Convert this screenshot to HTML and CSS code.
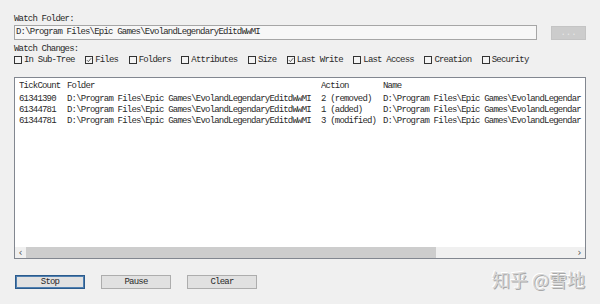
FILE: index.html
```html
<!DOCTYPE html>
<html lang="en">
<head>
    <meta charset="UTF-8">
    <title>Directory Watcher</title>
    <link rel="stylesheet" href="styles.css">
</head>
<body>
    <div class="window">
        <div class="label">Watch Folder:</div>
        <div class="folder-row">
            <div class="textbox">D:\Program Files\Epic Games\EvolandLegendaryEditdWwMI</div>
            <button class="browse-btn" disabled>...</button>
        </div>

        <div class="label changes">Watch Changes:</div>
        <div class="checks">
            <label class="check"><span class="box"></span>In Sub-Tree</label>
            <label class="check"><span class="box checked"><svg viewBox="0 0 8 8"><path d="M1.2 4.2 L3.2 6.2 L6.9 1.6" /></svg></span>Files</label>
            <label class="check"><span class="box"></span>Folders</label>
            <label class="check"><span class="box"></span>Attributes</label>
            <label class="check"><span class="box"></span>Size</label>
            <label class="check"><span class="box checked"><svg viewBox="0 0 8 8"><path d="M1.2 4.2 L3.2 6.2 L6.9 1.6" /></svg></span>Last Write</label>
            <label class="check"><span class="box"></span>Last Access</label>
            <label class="check"><span class="box"></span>Creation</label>
            <label class="check"><span class="box"></span>Security</label>
        </div>

        <div class="list">
            <div class="list-body">
                <div class="row header">
                    <span>TickCount</span><span>Folder</span><span>Action</span><span>Name</span>
                </div>
                <div class="row">
                    <span>61341390</span><span>D:\Program Files\Epic Games\EvolandLegendaryEditdWwMI</span><span>2 (removed)</span><span>D:\Program Files\Epic Games\EvolandLegendar</span>
                </div>
                <div class="row">
                    <span>61344781</span><span>D:\Program Files\Epic Games\EvolandLegendaryEditdWwMI</span><span>1 (added)</span><span>D:\Program Files\Epic Games\EvolandLegendar</span>
                </div>
                <div class="row">
                    <span>61344781</span><span>D:\Program Files\Epic Games\EvolandLegendaryEditdWwMI</span><span>3 (modified)</span><span>D:\Program Files\Epic Games\EvolandLegendar</span>
                </div>
            </div>
            <div class="hscroll">
                <span class="arrow">&lsaquo;</span>
                <div class="track"><div class="thumb"></div></div>
                <span class="arrow">&rsaquo;</span>
            </div>
        </div>

        <div class="buttons">
            <button class="btn focused">Stop</button>
            <button class="btn">Pause</button>
            <button class="btn">Clear</button>
        </div>

        <div class="watermark">知乎 @雪地</div>
    </div>
</body>
</html>
```

FILE: styles.css
```css
body {
    margin: 0;
    background-color: #f0f0f0;
    font-family: "Liberation Mono", monospace;
    font-size: 9px;
    letter-spacing: -0.8px;
    color: #2a2a2a;
}

.window {
    position: relative;
    width: 600px;
    height: 304px;
    padding: 14px 14px 0 14px;
    box-sizing: border-box;
}

.label {
    height: 10px;
    line-height: 10px;
}

.label.changes {
    margin-top: 4px;
}

.folder-row {
    display: flex;
    align-items: center;
    margin-top: 1px;
    height: 15px;
}

.textbox {
    width: 520px;
    height: 13px;
    line-height: 13px;
    padding-left: 1px;
    border: 1px solid #a6a6a6;
    background-color: #f7f7f7;
    white-space: nowrap;
}

.browse-btn {
    margin-left: 14px;
    width: 35px;
    height: 14px;
    padding: 0;
    border: 1px solid #c4c4c4;
    background-color: #cccccc;
    color: #e8e8e8;
    font-family: inherit;
    font-size: 9px;
    line-height: 10px;
}

.checks {
    display: flex;
    gap: 10.5px;
    margin-top: 1px;
    height: 10px;
    align-items: center;
}

.check {
    display: flex;
    align-items: center;
    gap: 2px;
    white-space: nowrap;
    line-height: 10px;
}

.box {
    width: 6px;
    height: 6px;
    border: 1px solid #333;
    background-color: #f4f4f4;
    display: inline-flex;
}

.box svg {
    width: 6px;
    height: 6px;
    fill: none;
    stroke: #333;
    stroke-width: 1;
}

.list {
    margin-top: 12px;
    width: 572px;
    height: 182px;
    border: 1px solid #828790;
    box-sizing: border-box;
    background-color: #fff;
    display: flex;
    flex-direction: column;
}

.list-body {
    flex: 1;
    overflow: hidden;
    padding-left: 4px;
}

.row {
    display: grid;
    grid-template-columns: 48px 254px 62px 1fr;
    height: 11px;
    line-height: 11px;
    white-space: nowrap;
}

.row span {
    overflow: hidden;
}

.row.header {
    height: 16px;
    line-height: 16px;
}

.hscroll {
    height: 11px;
    display: flex;
    align-items: center;
    background-color: #f0f0f0;
}

.arrow {
    width: 11px;
    text-align: center;
    font-size: 10px;
    line-height: 11px;
    color: #555;
    font-family: "DejaVu Sans", sans-serif;
    letter-spacing: 0;
}

.track {
    flex: 1;
    height: 11px;
}

.thumb {
    width: 410px;
    height: 11px;
    background-color: #cdcdcd;
}

.buttons {
    display: flex;
    gap: 16px;
    margin-top: 16px;
    padding-left: 1px;
}

.btn {
    width: 70px;
    height: 14px;
    padding: 0;
    border: 1px solid #adadad;
    background-color: #e1e1e1;
    font-family: inherit;
    font-size: 9px;
    letter-spacing: -0.8px;
    line-height: 12px;
    color: #2a2a2a;
}

.btn.focused {
    border-color: #2b5b8c;
    box-shadow: inset 0 0 0 1px #4f7fb0;
}

.watermark {
    position: absolute;
    right: 15px;
    bottom: 12px;
    font-family: "Noto Sans CJK SC", sans-serif;
    font-size: 18px;
    letter-spacing: 0;
    color: #d6d6d6;
    text-shadow: 1px 1px 0 #a8a8a8, -1px -1px 0 #fff;
}
```
